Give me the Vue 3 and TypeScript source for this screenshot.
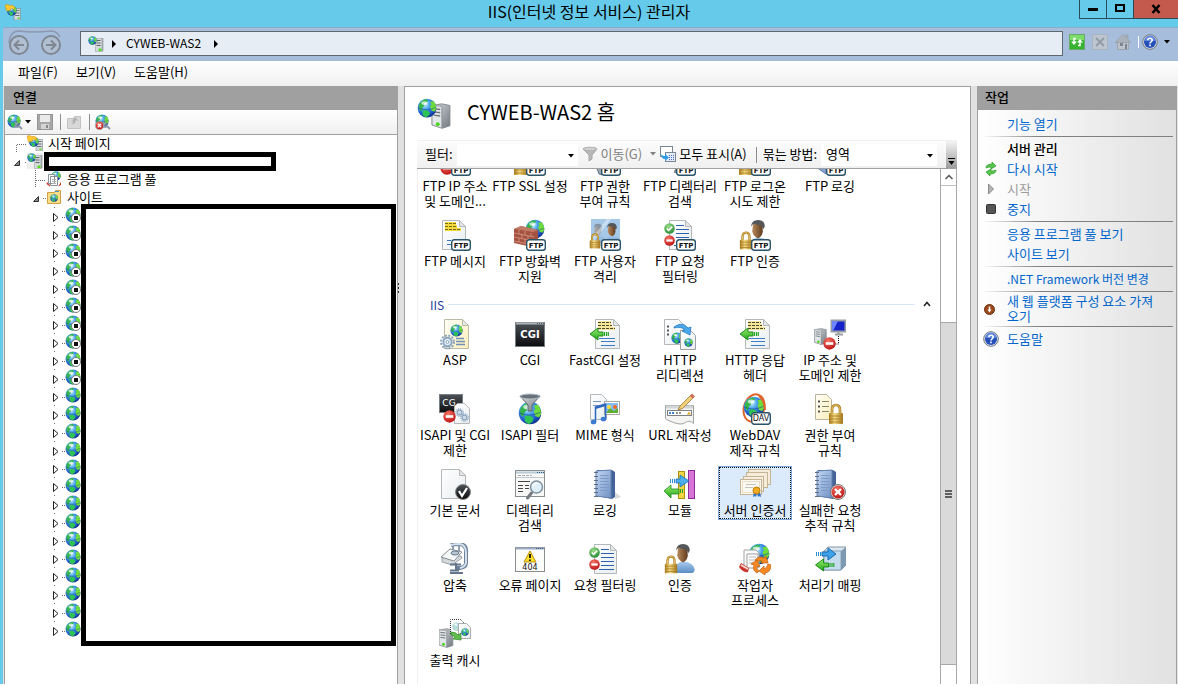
<script setup lang="ts">
import { onMounted, ref } from 'vue'

interface Feature {
  icon: string
  label: string
  selected?: boolean
}

interface Badge {
  text: string
  x: number
  y: number
  size: number
  tone: string
}

interface Action {
  label: string
  icon?: string
  kind?: 'heading' | 'disabled' | 'latin'
}

const ftpFeatures: Feature[] = [
  { icon: 'ftp-ip', label: 'FTP IP 주소\n및 도메인...' },
  { icon: 'ftp-ssl', label: 'FTP SSL 설정' },
  { icon: 'ftp-rules', label: 'FTP 권한\n부여 규칙' },
  { icon: 'ftp-browse', label: 'FTP 디렉터리\n검색' },
  { icon: 'ftp-ssl', label: 'FTP 로그온\n시도 제한' },
  { icon: 'ftp-log', label: 'FTP 로깅' },
  { icon: 'ftp-message', label: 'FTP 메시지' },
  { icon: 'ftp-firewall', label: 'FTP 방화벽\n지원' },
  { icon: 'ftp-users', label: 'FTP 사용자\n격리' },
  { icon: 'ftp-filter', label: 'FTP 요청\n필터링' },
  { icon: 'ftp-auth', label: 'FTP 인증' },
]

const iisFeatures: Feature[] = [
  { icon: 'asp', label: 'ASP' },
  { icon: 'cgi', label: 'CGI' },
  { icon: 'header', label: 'FastCGI 설정' },
  { icon: 'redirect', label: 'HTTP\n리디렉션' },
  { icon: 'header', label: 'HTTP 응답\n헤더' },
  { icon: 'ip', label: 'IP 주소 및\n도메인 제한' },
  { icon: 'isapi-cgi', label: 'ISAPI 및 CGI\n제한' },
  { icon: 'isapi-filter', label: 'ISAPI 필터' },
  { icon: 'mime', label: 'MIME 형식' },
  { icon: 'rewrite', label: 'URL 재작성' },
  { icon: 'webdav', label: 'WebDAV\n제작 규칙' },
  { icon: 'rules', label: '권한 부여\n규칙' },
  { icon: 'default-doc', label: '기본 문서' },
  { icon: 'browse', label: '디렉터리\n검색' },
  { icon: 'log', label: '로깅' },
  { icon: 'modules', label: '모듈' },
  { icon: 'certs', label: '서버 인증서', selected: true },
  { icon: 'failed', label: '실패한 요청\n추적 규칙' },
  { icon: 'compress', label: '압축' },
  { icon: 'errors', label: '오류 페이지' },
  { icon: 'filter', label: '요청 필터링' },
  { icon: 'auth', label: '인증' },
  { icon: 'worker', label: '작업자\n프로세스' },
  { icon: 'handler', label: '처리기 매핑' },
  { icon: 'cache', label: '출력 캐시' },
]

const sections = [
  { title: '', features: ftpFeatures },
  { title: 'IIS', features: iisFeatures },
]

const badges: Record<string, Badge> = {
  cgi: { text: 'CGI', x: 16, y: 20, size: 10, tone: 'light bold' },
  'isapi-cgi': { text: 'CG', x: 10, y: 13, size: 9, tone: 'light' },
  webdav: { text: 'DAV', x: 22, y: 28, size: 8, tone: 'dark' },
  errors: { text: '404', x: 16, y: 27, size: 8, tone: 'dark' },
}

function badgesFor(icon: string): Badge[] {
  if (icon.startsWith('ftp-')) return [{ text: 'FTP', x: 22, y: 29, size: 7, tone: 'dark bold' }]
  return badges[icon] ? [badges[icon]] : []
}

const actionGroups: Action[][] = [
  [{ label: '기능 열기' }],
  [
    { label: '서버 관리', kind: 'heading' },
    { label: '다시 시작', icon: 'restart' },
    { label: '시작', icon: 'start', kind: 'disabled' },
    { label: '중지', icon: 'stop' },
  ],
  [{ label: '응용 프로그램 풀 보기' }, { label: '사이트 보기' }],
  [{ label: '.NET Framework 버전 변경', kind: 'latin' }],
  [{ label: '새 웹 플랫폼 구성 요소 가져오기', icon: 'download' }],
  [{ label: '도움말', icon: 'help' }],
]

const menus = ['파일(F)', '보기(V)', '도움말(H)']
const sites = Array.from({ length: 24 }, (_, i) => ({ id: i, stopped: i < 10 }))

const filterText = ref('')
const grouping = ref('영역')
const featureView = ref<HTMLElement | null>(null)

onMounted(() => {
  if (featureView.value) featureView.value.scrollTop = 27
})
</script>

<template>
  <div class="window">
    <svg class="defs" width="0" height="0" aria-hidden="true">
      <defs>
        <radialGradient id="g-sea" cx=".38" cy=".3" r=".75">
          <stop offset="0" stop-color="#d2f4ff" />
          <stop offset=".35" stop-color="#4aa6ea" />
          <stop offset=".75" stop-color="#1c55c6" />
          <stop offset="1" stop-color="#0c2a80" />
        </radialGradient>
        <linearGradient id="g-page" x1="0" y1="0" x2="1" y2="1">
          <stop offset="0" stop-color="#fff" />
          <stop offset="1" stop-color="#e9edf0" />
        </linearGradient>
        <linearGradient id="g-cream" x1="0" y1="0" x2="1" y2="1">
          <stop offset="0" stop-color="#fffef6" />
          <stop offset="1" stop-color="#fbeebb" />
        </linearGradient>
        <linearGradient id="g-gold" x1="0" y1="0" x2="1" y2="0">
          <stop offset="0" stop-color="#a87a1c" />
          <stop offset=".4" stop-color="#f7dc86" />
          <stop offset="1" stop-color="#a5761b" />
        </linearGradient>
        <linearGradient id="g-steel" x1="0" y1="0" x2="1" y2="1">
          <stop offset="0" stop-color="#d5d9dc" />
          <stop offset="1" stop-color="#71797f" />
        </linearGradient>
        <linearGradient id="g-black" x1="0" y1="0" x2="0" y2="1">
          <stop offset="0" stop-color="#4c5258" />
          <stop offset="1" stop-color="#0b0c0e" />
        </linearGradient>
        <radialGradient id="g-red" cx=".4" cy=".3" r=".7">
          <stop offset="0" stop-color="#f77466" />
          <stop offset="1" stop-color="#bd1515" />
        </radialGradient>
        <radialGradient id="g-green" cx=".4" cy=".3" r=".7">
          <stop offset="0" stop-color="#9bdd88" />
          <stop offset="1" stop-color="#2b8f37" />
        </radialGradient>
        <linearGradient id="g-arrow" x1="0" y1="0" x2="0" y2="1">
          <stop offset="0" stop-color="#9df06c" />
          <stop offset="1" stop-color="#1fa31b" />
        </linearGradient>
        <linearGradient id="g-book" x1="0" y1="0" x2="1" y2="1">
          <stop offset="0" stop-color="#c3d7f2" />
          <stop offset="1" stop-color="#6f90c4" />
        </linearGradient>
        <linearGradient id="g-shirt" x1="0" y1="0" x2="0" y2="1">
          <stop offset="0" stop-color="#a9cbee" />
          <stop offset="1" stop-color="#5b8ec4" />
        </linearGradient>
        <linearGradient id="g-skin" x1="0" y1="0" x2="1" y2="0">
          <stop offset="0" stop-color="#b98a5c" />
          <stop offset="1" stop-color="#5e3b1e" />
        </linearGradient>
      </defs>

      <symbol id="globe" viewBox="0 0 32 32">
        <circle cx="16" cy="16" r="15" fill="url(#g-sea)" />
        <path d="M3 11C6 5 11 2 15 2l3 2-3 3-4 1 1 4-3 3-2 6-4-3z" fill="#35b54a" />
        <path d="M21 6l6-1 3 6 1 6-3 5-5-2-2-6 2-4z" fill="#6fdc3c" />
        <path d="M9 20l6-1 6 4-2 5-5 3-5-4z" fill="#2fc354" />
        <ellipse cx="12" cy="8" rx="5" ry="3" fill="#fff" opacity=".7" />
        <path d="M2 16q14 6 28-1" fill="none" stroke="#123c9b" stroke-width="1.500" opacity=".5" />
      </symbol>
      <symbol id="server" viewBox="0 0 32 32">
        <path d="M5 3l12-2 10 2v25l-9 3-13-4z" fill="url(#g-steel)" stroke="#7a8288" />
        <path d="M5 3l12 1v27L5 27z" fill="#e3e6e8" stroke="#868e94" />
        <path d="M7 7l8 1M7 11l8 1M7 15l8 1" stroke="#6d757b" stroke-width="1.600" />
        <circle cx="12" cy="26" r="2.400" fill="#48d81c" />
      </symbol>
      <symbol id="host" viewBox="0 0 32 32">
        <path d="M15 5h15v25l-3 1H15z" fill="#a9b0b5" stroke="#777f85" />
        <path d="M15 5h12v26H15z" fill="#d5d9dc" />
        <path d="M17 9h8M17 14h8M17 19h8" stroke="#5d666c" stroke-width="2" />
        <rect x="21" y="25" width="6" height="5" fill="#54dd20" />
        <use href="#globe" x="0" y="0" width="18" height="18" />
      </symbol>
      <symbol id="start-page" viewBox="0 0 32 32">
        <path d="M18 9h13v23H18z" fill="#d5d9dc" stroke="#6f777d" />
        <path d="M20 13h9M20 18h9M20 23h9" stroke="#6d767c" stroke-width="2" />
        <rect x="25" y="27" width="4" height="3" fill="#54dd20" />
        <use href="#globe" x="3" y="3" width="21" height="21" />
        <path d="M0 2l6-1 3 2q6-2 11 3l-3 5q-4-4-7-2l2 3-9 2z" fill="#ffc931" stroke="#c8860c" />
      </symbol>
      <symbol id="lock" viewBox="0 0 16 20">
        <path d="M4 10V6q0-5 4-5t4 5v4" fill="none" stroke="#a87a1c" stroke-width="2.600" />
        <path d="M4 10V6q0-5 4-5t4 5v4" fill="none" stroke="#eccb70" />
        <rect x="1" y="9" width="14" height="11" rx="1" fill="url(#g-gold)" />
        <path d="M1 12h14M1 15h14M1 18h14" stroke="#a5781f" stroke-width=".8" />
      </symbol>
      <symbol id="tag" viewBox="0 0 20 12" preserveAspectRatio="none">
        <rect x=".7" y=".7" width="18.600" height="10.600" rx="2.500" fill="#fff" stroke="#2b5468" stroke-width="1.400" />
      </symbol>
      <symbol id="minus" viewBox="0 0 12 12">
        <circle cx="6" cy="6" r="5.700" fill="url(#g-red)" />
        <rect x="2.500" y="4.800" width="7" height="2.400" fill="#fff" />
      </symbol>
      <symbol id="check" viewBox="0 0 12 12">
        <circle cx="6" cy="6" r="5.700" fill="url(#g-green)" />
        <path d="M3 6l2 2 4-4" fill="none" stroke="#fff" stroke-width="1.800" />
      </symbol>
      <symbol id="cross" viewBox="0 0 16 16">
        <circle cx="8" cy="8" r="7.500" fill="#e7e7e7" stroke="#777" />
        <circle cx="8" cy="8" r="6.500" fill="url(#g-red)" />
        <path d="M5 5l6 6M11 5l-6 6" stroke="#fff" stroke-width="2.200" />
      </symbol>
      <symbol id="person" viewBox="0 0 26 32">
        <path d="M4 30q0-10 9-11 11 1 12 8 0 4-4 4H6z" fill="url(#g-shirt)" />
        <path d="M8 5q5-4 9 0l1 8q-1 6-5 7-5-2-6-7z" fill="url(#g-skin)" />
        <path d="M6 8q0-7 7-7t7 7l-2 3-1-4-9-2z" fill="#55585a" />
      </symbol>
      <symbol id="book" viewBox="0 0 32 32">
        <path d="M8 2h15l3 2v25l-3 2-15-3z" fill="#44639a" />
        <path d="M7 3l15-1v28L7 28z" fill="url(#g-book)" stroke="#6480ae" />
        <path d="M11 7.500h9M11 10.500h9M11 13.500h9M11 16.500h9M11 19.500h9M11 22.500h9" stroke="#7f9cc8" />
        <path d="M5 4.500h4M5 8.500h4M5 12.500h4M5 16.500h4M5 20.500h4M5 24.500h4M5 28.500h4" stroke="#5f6e86" />
      </symbol>
      <symbol id="left-arrow" viewBox="0 0 20 14">
        <path d="M1 7l8-6v4h5v4H9v4z" fill="url(#g-arrow)" stroke="#1d8d1b" />
        <path d="M15.500 5v4M17.500 5v4M19.300 5v4" stroke="#27a824" stroke-width="1.200" />
      </symbol>
      <symbol id="gear" viewBox="0 0 16 16">
        <circle cx="8" cy="8" r="6.500" fill="none" stroke="#8ea6bd" stroke-width="2" stroke-dasharray="2 1.400" />
        <circle cx="8" cy="8" r="4.200" fill="#e6eff7" stroke="#8ba6c1" stroke-width="2" />
        <circle cx="8" cy="8" r="1.500" fill="#fff" stroke="#8ba6c1" />
      </symbol>
      <symbol id="magnifier" viewBox="0 0 18 20">
        <path d="M6 13l-4 5" stroke="#777b7f" stroke-width="3" stroke-linecap="round" />
        <circle cx="11" cy="7" r="6" fill="#dff0fb" stroke="#7e91a1" stroke-width="1.500" />
        <path d="M7 6q2-3 5-3" stroke="#fff" stroke-width="1.500" fill="none" />
      </symbol>

      <symbol id="ftp-ip" viewBox="0 0 32 32">
        <use href="#minus" x="1" y="17" width="14" height="14" />
        <use href="#tag" x="12" y="20" width="20" height="12" />
      </symbol>
      <symbol id="ftp-ssl" viewBox="0 0 32 32">
        <use href="#lock" x="-1" y="11" width="16" height="20" />
        <use href="#tag" x="12" y="20" width="20" height="12" />
      </symbol>
      <symbol id="ftp-rules" viewBox="0 0 32 32">
        <path d="M7 22l3 8 3 1V20z" fill="#9ba6b3" stroke="#66717d" />
        <use href="#tag" x="12" y="20" width="20" height="12" />
      </symbol>
      <symbol id="ftp-browse" viewBox="0 0 32 32">
        <path d="M14 22l-3 7" stroke="#7d8489" stroke-width="3" />
        <use href="#tag" x="12" y="20" width="20" height="12" />
      </symbol>
      <symbol id="ftp-log" viewBox="0 0 32 32">
        <path d="M2 23l10-2v9z" fill="#85a5d4" stroke="#5c7cae" />
        <use href="#tag" x="12" y="20" width="20" height="12" />
      </symbol>
      <symbol id="ftp-message" viewBox="0 0 32 32">
        <path d="M3.500 1.500h17l6 6v23h-23z" fill="url(#g-page)" stroke="#b4b8bb" />
        <path d="M20.500 1.500v6h6z" fill="#e4e6e8" stroke="#b4b8bb" />
        <path d="M6 4.500h11M6 7.500h12M6 10.500h16" stroke="#f2da3c" stroke-width="3" />
        <path d="M6 4.500h11M6 7.500h12M6 10.500h16" stroke="#7b6d16" stroke-dasharray="3 1" />
        <path d="M8 21.500h4M8 25.500h4" stroke="#3672b8" />
        <use href="#tag" x="12" y="20" width="20" height="12" />
      </symbol>
      <symbol id="ftp-firewall" viewBox="0 0 32 32">
        <use href="#globe" x="11" y="0" width="20" height="20" />
        <path d="M0 10l7-3 17 4v16l-6 1L0 24z" fill="#a55240" />
        <path d="M0 14l20 4M0 18l20 4M0 22l18 4M5 11v4M11 12v4M17 14v3M8 15v4M14 17v4M5 19v4M11 20v4" stroke="#dba38f" stroke-width=".7" />
        <path d="M0 10l7-3 17 4-5 2z" fill="#c27b66" />
        <use href="#tag" x="12" y="20" width="20" height="12" />
      </symbol>
      <symbol id="ftp-users" viewBox="0 0 32 32">
        <rect x="2" y="0" width="29" height="27" fill="#a7c9e8" />
        <use href="#person" x="1" y="2" width="16" height="24" opacity=".45" />
        <use href="#person" x="14" y="2" width="18" height="25" />
        <path d="M2 20L18 0h4L2 26z" fill="#fff" opacity=".4" />
        <use href="#lock" x="0" y="12" width="12" height="20" />
        <use href="#tag" x="12" y="20" width="20" height="12" />
      </symbol>
      <symbol id="filter" viewBox="0 0 32 32">
        <path d="M5.500 1.500h16l6 6v23h-22z" fill="url(#g-page)" stroke="#b4b8bb" />
        <path d="M21.500 1.500v6h6z" fill="#e4e6e8" stroke="#b4b8bb" />
        <path d="M12 6.500h8M12 10.500h13M12 14.500h13M12 18.500h13M12 22.500h13M10 26.500h15" stroke="#2a62ab" />
        <use href="#check" x="0" y="4" width="11" height="11" />
        <use href="#minus" x="0" y="16" width="11" height="11" />
      </symbol>
      <symbol id="ftp-filter" viewBox="0 0 32 32">
        <use href="#filter" width="32" height="32" />
        <use href="#tag" x="12" y="20" width="20" height="12" />
      </symbol>
      <symbol id="auth" viewBox="0 0 32 32">
        <use href="#person" x="5" y="0" width="28" height="31" />
        <use href="#lock" x="0" y="11" width="14" height="21" />
      </symbol>
      <symbol id="ftp-auth" viewBox="0 0 32 32">
        <use href="#auth" width="32" height="32" />
        <use href="#tag" x="12" y="20" width="20" height="12" />
      </symbol>
      <symbol id="asp" viewBox="0 0 32 32">
        <path d="M5.500 1.500h18l6 6v23h-24z" fill="url(#g-cream)" stroke="#bdbaa8" />
        <path d="M23.500 1.500v6h6z" fill="#e9e9e4" stroke="#bdbaa8" />
        <use href="#globe" x="11" y="6" width="13" height="13" />
        <path d="M17 20.500h8M17 23.500h9M17 26.500h9" stroke="#6f8fb5" stroke-width="1.500" />
        <use href="#gear" x="0" y="16" width="17" height="16" />
      </symbol>
      <symbol id="cgi" viewBox="0 0 32 32">
        <rect x="1.500" y="4.500" width="29" height="24" fill="url(#g-black)" stroke="#777e84" />
        <path d="M2 5.500h28" stroke="#aeb4b9" stroke-width="2" />
        <path d="M23 5.500h7" stroke="#4f565c" stroke-dasharray="1 1" />
      </symbol>
      <symbol id="header" viewBox="0 0 32 32">
        <path d="M6.500 1.500h18l6 6v23h-24z" fill="url(#g-page)" stroke="#b4b8bb" />
        <path d="M24.500 1.500v6h6z" fill="#e4e6e8" stroke="#b4b8bb" />
        <path d="M9 4.500h13M9 7.500h14M9 10.500h17" stroke="#f4e69a" stroke-width="3" />
        <path d="M9 4.500h13M9 7.500h14M9 10.500h17" stroke="#4e4826" stroke-dasharray="3 1" />
        <path d="M10 20.500h16M12 23.500h14M12 27.500h14" stroke="#3c7dc4" />
        <use href="#left-arrow" x="0" y="9" width="20" height="14" />
      </symbol>
      <symbol id="redirect" viewBox="0 0 32 32">
        <path d="M.500 1.500h14l5 5v20H.500z" fill="url(#g-page)" stroke="#b4b8bb" />
        <path d="M3 8.500h3M3 12.500h3M3 16.500h3" stroke="#555" stroke-width="2" stroke-dasharray="2 1" />
        <use href="#globe" x="7" y="14" width="12" height="12" />
        <path d="M16.500 12.500h10l5 5v14h-15z" fill="url(#g-page)" stroke="#9ca1a4" />
        <use href="#globe" x="20" y="20" width="9" height="9" />
        <path d="M10 9q8-6 14 1l3-1-1 8-8-4 3-1q-4-4-11-2z" fill="#4ba9e9" stroke="#1971bd" stroke-width=".7" />
      </symbol>
      <symbol id="ip" viewBox="0 0 32 32">
        <use href="#server" x="-2" y="8" width="17" height="21" />
        <path d="M17.500 2.500h14v11h-14z" fill="#1523c8" stroke="#989da3" stroke-width="2" />
        <path d="M18 3h6l-5 10h-1z" fill="#6e85ff" />
        <path d="M21 16.500h8M24.500 14v3" stroke="#9ba0a4" stroke-width="2" />
        <path d="M24.500 18v8h-4" fill="none" stroke="#111" stroke-dasharray="1 1" />
        <use href="#minus" x="9" y="19" width="13" height="13" />
      </symbol>
      <symbol id="isapi-cgi" viewBox="0 0 32 32">
        <rect x=".5" y="1.500" width="23" height="18" fill="url(#g-black)" stroke="#777e84" />
        <path d="M18.500 10.500h7l5 5v15h-15v-17z" fill="url(#g-page)" stroke="#b4b8bb" />
        <use href="#gear" x="16" y="15" width="9" height="9" />
        <use href="#gear" x="21" y="20" width="9" height="9" />
        <use href="#minus" x="4" y="17" width="13" height="13" />
      </symbol>
      <symbol id="isapi-filter" viewBox="0 0 32 32">
        <use href="#globe" x="4" y="8" width="24" height="24" />
        <path d="M6 3l8 9v6h4v-6l8-9z" fill="url(#g-steel)" stroke="#5d676f" />
        <ellipse cx="16" cy="3.500" rx="10" ry="2.500" fill="#66717b" stroke="#b7c0c7" />
      </symbol>
      <symbol id="mime" viewBox="0 0 32 32">
        <path d="M1.500 1.500h11l5 5v20h-16z" fill="url(#g-page)" stroke="#b4b8bb" />
        <path d="M4 8.500h8M4 12.500h8" stroke="#7c98bc" />
        <rect x="15.500" y="8.500" width="15" height="13" fill="#fff" stroke="#a7a7a7" />
        <rect x="17" y="10" width="12" height="10" fill="#84bdf4" />
        <path d="M17 20l4-5 4 3 4-3v5z" fill="#5fac32" />
        <circle cx="26" cy="14" r="2" fill="#f36b21" />
        <circle cx="20" cy="14" r="2" fill="#ffdd3d" />
        <path d="M6.500 29V14l10-3v15" fill="none" stroke="#2c67bf" stroke-width="1.500" />
        <path d="M6.500 15l10-3" stroke="#2c67bf" stroke-width="2" />
        <ellipse cx="4.500" cy="29" rx="2.800" ry="2.300" fill="#3b7bd2" />
        <ellipse cx="14.500" cy="26" rx="2.800" ry="2.300" fill="#3b7bd2" />
      </symbol>
      <symbol id="rewrite" viewBox="0 0 32 32">
        <path d="M1.500 12.500h28v18q-4-4-8-1t-12 0-8-4z" fill="#f4f5f3" stroke="#9da2a3" />
        <path d="M2 14h27" stroke="#d2d6d7" stroke-width="3" />
        <rect x="3.500" y="17.500" width="24" height="5" fill="#fff" stroke="#7b8184" />
        <path d="M5 20h6" stroke="#3e83d8" stroke-width="2" stroke-dasharray="2 1" />
        <path d="M12 20h5" stroke="#222" stroke-dasharray="2 1" />
        <path d="M23 21.500l2-3 2 3z" fill="#e3a920" />
        <path d="M14 17l2-4L28 1l2.500 2.500-12 12z" fill="#f2cf79" stroke="#a07332" stroke-width=".8" />
        <path d="M28 1l2.500 2.500-2 2-2.500-2.500z" fill="#d86d60" />
      </symbol>
      <symbol id="webdav" viewBox="0 0 32 32">
        <ellipse cx="15" cy="15" rx="10" ry="14" fill="none" stroke="#e0642a" stroke-width="2" transform="rotate(18 15 15)" />
        <use href="#globe" x="4" y="3" width="22" height="22" />
        <path d="M20 3q6 5 6 14" fill="none" stroke="#e0642a" stroke-width="2" />
        <use href="#tag" x="12" y="19" width="20" height="13" />
      </symbol>
      <symbol id="rules" viewBox="0 0 32 32">
        <path d="M1.500 1.500h11l5 5v20h-16z" fill="url(#g-cream)" stroke="#b9b59f" />
        <path d="M4 8.500h2M4 13.500h2M4 18.500h2" stroke="#555" stroke-width="2" />
        <path d="M8 8.500h7M8 13.500h7M8 18.500h7" stroke="#8a8666" />
        <use href="#lock" x="14" y="10" width="16" height="22" />
      </symbol>
      <symbol id="default-doc" viewBox="0 0 32 32">
        <path d="M2.500 1.500h18l6 6v23h-24z" fill="url(#g-page)" stroke="#b4b8bb" />
        <path d="M20.500 1.500v6h6z" fill="#e4e6e8" stroke="#b4b8bb" />
        <circle cx="24" cy="24" r="7.500" fill="url(#g-black)" stroke="#888" />
        <path d="M20 23l3 5 5-8" fill="none" stroke="#fff" stroke-width="2.200" />
      </symbol>
      <symbol id="browse" viewBox="0 0 32 32">
        <rect x="1.500" y="2.500" width="29" height="26" fill="#f8f8f7" stroke="#898e90" />
        <path d="M2 4.500h28" stroke="#b9cbd6" stroke-width="2" />
        <path d="M23 4.500h7" stroke="#315e85" stroke-dasharray="1 1" />
        <path d="M4 7.500h14" stroke="#a9adaf" stroke-dasharray="3 1" />
        <path d="M2 9.500h28" stroke="#c5c8ca" />
        <path d="M4 13.500h12M4 17.500h5M11 17.500h4M4 20.500h5M11 20.500h4M4 23.500h5" stroke="#454545" />
        <use href="#magnifier" x="11" y="12" width="19" height="20" />
      </symbol>
      <symbol id="log" viewBox="0 0 32 32">
        <path d="M26 24l6 5-6 2z" fill="#d7d9dd" />
        <use href="#book" width="32" height="32" />
      </symbol>
      <symbol id="modules" viewBox="0 0 32 32">
        <rect x="14.500" y="3.500" width="6" height="27" fill="#f0d544" stroke="#b58e10" />
        <rect x="24.500" y="2.500" width="6" height="28" fill="#d873d7" stroke="#8d2c98" />
        <path d="M12 11h4V7l9 6-9 6v-4h-4z" fill="#4bacee" stroke="#1b73bd" stroke-width=".8" />
        <path d="M6.500 11v4M8.500 11v4M10.500 11v4" stroke="#2d8ed8" />
        <path d="M0 23l7-6v4h8v5H7v4z" fill="url(#g-arrow)" stroke="#1d8d1b" stroke-width=".8" />
        <path d="M16.500 21v4M18.500 21v4" stroke="#27a824" />
      </symbol>
      <symbol id="certs" viewBox="0 0 32 32">
        <g fill="#f5ecda" stroke="#c4b494">
          <rect x="9.500" y="1.500" width="22" height="15" />
          <rect x="7.500" y="4.500" width="21" height="15" />
          <rect x="4.500" y="8.500" width="20" height="15" />
          <rect x="1.500" y="11.500" width="21" height="15" fill="#fbf8ef" />
        </g>
        <rect x="3.500" y="13.500" width="17" height="11" fill="none" stroke="#e9ddc4" />
        <path d="M7 16.500h10M6 19.500h8" stroke="#c4c4c4" />
        <path d="M15 24l-1 5 2-1 1 1 1-4 1 4 1-1 2 1-1-5z" fill="#2d73c8" />
        <circle cx="17.500" cy="22.500" r="3.500" fill="#f0aa22" stroke="#bd7d0b" />
      </symbol>
      <symbol id="failed" viewBox="0 0 32 32">
        <use href="#book" x="-4" width="32" height="32" />
        <use href="#cross" x="16" y="16" width="16" height="16" />
      </symbol>
      <symbol id="compress" viewBox="0 0 32 32">
        <path d="M12 2q3-1 9-1 7 1 6 9v10q0 4-6 5h-3" fill="none" stroke="#6e8199" stroke-width="4" />
        <path d="M12 2q3-1 9-1 6 1 6 9v10q-1 4-6 5" fill="none" stroke="#d3dfec" stroke-width="2" />
        <path d="M14 3v9M20 3v9" stroke="#71869d" stroke-width="1.500" />
        <path d="M3 19l10 3 10-7-1-2H3z" fill="#d5d9dc" stroke="#7d858c" stroke-width=".7" />
        <path d="M2 14l9-8 12 3-8 9z" fill="#f7f8f9" stroke="#858d94" />
        <path d="M17 20v8M11 21.500h11M11 30h13M11 27.500h9" stroke="#64768b" stroke-width="2" />
        <ellipse cx="16" cy="10" rx="4" ry="2" fill="#b9c6d4" stroke="#64768b" />
      </symbol>
      <symbol id="errors" viewBox="0 0 32 32">
        <rect x="1.500" y="4.500" width="29" height="24" fill="#fdfdfc" stroke="#898e90" />
        <path d="M2 5.500h28" stroke="#9aabc4" stroke-width="2" />
        <path d="M22 5.500h8" stroke="#315e85" stroke-dasharray="1 1" />
        <path d="M16 8l6 11H10z" fill="#ffdf2d" stroke="#bd8e09" stroke-linejoin="round" />
        <path d="M16 11v4M16 16.500V18" stroke="#111" stroke-width="1.800" />
      </symbol>
      <symbol id="worker" viewBox="0 0 32 32">
        <use href="#globe" x="9" y="0" width="22" height="22" />
        <path d="M5 7h12l3 3v14H5z" fill="#fafafa" stroke="#a5a5a5" />
        <path d="M8 11h11v14H8z" fill="#fff" stroke="#9d9d9d" />
        <path d="M10 14h7M10 17h7M10 20h5" stroke="#b5b5b5" />
        <path d="M0 24l2-4 8 5-1 4q-5 1-9-5z" fill="#c8362a" />
        <path d="M2 22l7 4" stroke="#f5d9d4" stroke-width="2" />
        <g fill="#f58a25" stroke="#c25908" stroke-width=".7">
          <path d="M16 17q4-5 9-2l2-2 2 7-7 0 1-2q-3-1-5 1z" />
          <path d="M32 22q0 7-6 8v2l-6-4 5-5v3q3-1 4-5z" />
          <path d="M18 30q-5-3-3-8l-3-1 6-4 3 7-3-1q-1 3 2 5z" />
        </g>
      </symbol>
      <symbol id="handler" viewBox="0 0 32 32">
        <path d="M10 8l4-4h18v18l-5 5H10z" fill="#dce6ee" stroke="#8497a7" />
        <path d="M10 8h17v19H10z" fill="#c5dcef" stroke="#8da4b8" />
        <path d="M27 8l5-4v18l-5 5z" fill="#7e9ab2" />
        <path d="M8 9h6V5l8 6-8 6v-4H8z" fill="#3fa2e8" stroke="#176bb3" />
        <path d="M2.500 9v4M4.500 9v4M6.500 9v4" stroke="#2d8ed8" />
        <use href="#left-arrow" x="0" y="15" width="21" height="14" />
      </symbol>
      <symbol id="cache" viewBox="0 0 32 32">
        <use href="#server" x="-3" y="7" width="20" height="26" />
        <path d="M11.500 16V1.500h10l5 5" fill="#fff" stroke="#333" stroke-dasharray="1 1" />
        <use href="#globe" x="13" y="4" width="9" height="9" opacity=".35" />
        <path d="M19.500 5.500h8l4 4v11h-12z" fill="url(#g-page)" stroke="#a9adb0" />
        <use href="#globe" x="22" y="10" width="8" height="8" />
        <path d="M12 14q5 0 7 3l3-2v7l-8-1 2-2q-2-2-4-2z" fill="#61bd4b" stroke="#2f8a2a" stroke-width=".7" />
      </symbol>

      <symbol id="pool" viewBox="0 0 16 16">
        <use href="#globe" x="5" y="0" width="10" height="10" />
        <path d="M1 11l3 3v1.500L.500 13zM15 11v3l-3 1.500z" fill="#d63a2b" />
        <path d="M2.500 3.500h6v9h-6zM4.500 5.500h7v9h-7z" fill="#fff" stroke="#8b9297" />
        <path d="M6 8.500h4M6 10.500h4M6 12.500h4" stroke="#b0b0b0" />
      </symbol>
      <symbol id="site-folder" viewBox="0 0 16 16">
        <path d="M1.500 3.500h7l1-2h5v13h-13z" fill="#f9dd85" stroke="#d1a243" />
        <path d="M9 2.500h4" stroke="#4c95dc" />
        <use href="#globe" x="4" y="5" width="8" height="8" />
      </symbol>
      <symbol id="stop-badge" viewBox="0 0 10 10">
        <circle cx="5" cy="5" r="4.500" fill="#fff" stroke="#777" />
        <rect x="3" y="3" width="4" height="4" fill="#111" />
      </symbol>
      <symbol id="connect" viewBox="0 0 16 16">
        <use href="#globe" x="0" y="0" width="14" height="14" />
        <path d="M8 8l3 3M11 9l-3 3q3 2 4 0l3 3" stroke="#8a9ba8" stroke-width="1.800" fill="none" />
      </symbol>
      <symbol id="restart" viewBox="0 0 16 16">
        <path d="M3 7q0-4 6-4V1l4 4-5 3V6Q5 6 3 7z" fill="#57c64b" stroke="#2f9a2c" stroke-width=".7" />
        <path d="M13 9q0 4-6 4v2l-4-4 5-3v2q3 0 5-1z" fill="#57c64b" stroke="#2f9a2c" stroke-width=".7" />
      </symbol>
      <symbol id="start" viewBox="0 0 16 16">
        <path d="M5.500 3v10l5-5z" fill="#b4b4b4" stroke="#8a8a8a" />
      </symbol>
      <symbol id="stop" viewBox="0 0 16 16">
        <rect x="3.500" y="3.500" width="9" height="9" rx="1" fill="#555" stroke="#333" />
      </symbol>
      <symbol id="download" viewBox="0 0 16 16">
        <circle cx="6.500" cy="8.500" r="5" fill="#9c4a1c" stroke="#6d3010" />
        <path d="M6.500 5.500v4" stroke="#fff" stroke-width="1.500" />
        <path d="M4.500 8.500l2 3 2-3z" fill="#fff" />
      </symbol>
      <symbol id="help" viewBox="0 0 16 16">
        <circle cx="8" cy="8" r="7.300" fill="#dfe3ea" stroke="#71777f" />
        <circle cx="8" cy="8" r="6" fill="#2450b8" />
        <path d="M2.500 7a5.500 5.500 0 0 1 11 0z" fill="#5d86dc" />
        <path d="M5.800 6.200q0-2 2.200-2t2.200 1.900q0 1-1.100 1.700T8 9.500M8 10.600v1.700" fill="none" stroke="#fff" stroke-width="1.600" />
      </symbol>
      <symbol id="caret" viewBox="0 0 6 4">
        <path d="M0 0h6L3 3.500z" fill="currentColor" />
      </symbol>
    </svg>

    <header class="titlebar">
      <svg class="ico16 app-icon"><use href="#start-page" /></svg>
      <h1>IIS(인터넷 정보 서비스) 관리자</h1>
      <div class="window-buttons">
        <button type="button" aria-label="최소화"><svg width="10" height="10"><rect y="4" width="10" height="3" /></svg></button>
        <button type="button" aria-label="최대화"><svg width="10" height="10"><rect x="1" y="1" width="8" height="6" fill="none" stroke="#000" stroke-width="2" /></svg></button>
        <button type="button" class="close" aria-label="닫기"><svg width="10" height="10"><path d="M1.500 1l7 8M8.500 1l-7 8" stroke="#000" stroke-width="2.500" /></svg></button>
      </div>
    </header>

    <div class="frame">
      <div class="address-row">
        <div class="history">
          <svg class="history-shape" width="54" height="30" aria-hidden="true">
            <path d="M1 18Q0 3 10 2h34q9 0 9 12v4q-4 9-14 8-6-5-12-5t-12 5Q3 27 1 18z" fill="#9fb3cd" opacity=".7" />
            <path d="M1 14Q2 2 11 2q6 1 15 1T43 2q6 0 9 6" fill="none" stroke="#8b9ab2" stroke-width="1.500" />
          </svg>
          <button type="button" aria-label="뒤로"><svg width="20" height="20"><circle cx="10" cy="10" r="9" /><path d="M15 10H6M10 5.500L5.500 10l4.500 4.500" /></svg></button>
          <button type="button" aria-label="앞으로"><svg width="20" height="20"><circle cx="10" cy="10" r="9" /><path d="M5 10h9M10 5.500l4.500 4.500-4.500 4.500" /></svg></button>
        </div>
        <nav class="address" aria-label="주소">
          <svg class="ico16"><use href="#host" /></svg>
          <svg width="4" height="8"><path d="M0 0v8l4-4z" /></svg>
          <a href="#server">CYWEB-WAS2</a>
          <svg width="4" height="8"><path d="M0 0v8l4-4z" /></svg>
        </nav>
        <div class="address-tools">
          <button type="button" aria-label="새로 고침">
            <svg class="ico16" viewBox="0 0 16 16"><rect x=".5" y=".5" width="15" height="15" fill="#36b32f" stroke="#6aa86c" /><rect x="1" y="1" width="14" height="5" fill="#7bdc68" /><path d="M7 4.500H5V8M9 11.500h2V8" fill="none" stroke="#fff" stroke-width="1.500" /><path d="M2 7.500h6l-3 3.500zM8 8.500h6L11 5z" fill="#fff" /></svg>
          </button>
          <button type="button" aria-label="중지">
            <svg class="ico16" viewBox="0 0 16 16"><rect x=".5" y=".5" width="15" height="15" fill="#bcc5d0" stroke="#a9b3be" /><path d="M4 4l8 8M12 4l-8 8" stroke="#929ba6" stroke-width="1.800" /></svg>
          </button>
          <button type="button" aria-label="홈">
            <svg class="ico16" viewBox="0 0 16 16"><path d="M2.500 8v7.500h11V8" fill="#bcc3cb" stroke="#9ba4ad" /><path d="M0 8.500L8 .5l3 3V1h2v4.500l3 3z" fill="#aab3bd" stroke="#929ba5" stroke-width=".7" /><path d="M5 9h3v3H5zM10 10h2v5h-2z" fill="#7d8690" /></svg>
          </button>
          <span class="tool-divider"></span>
          <button type="button" class="help-button" aria-label="도움말"><svg class="ico16"><use href="#help" /></svg><svg class="caret"><use href="#caret" /></svg></button>
        </div>
      </div>

      <nav class="menubar" aria-label="메뉴">
        <button v-for="menu in menus" :key="menu" type="button">{{ menu }}</button>
      </nav>

      <main class="panes">
        <section class="connections">
          <h2 class="pane-title">연결</h2>
          <div class="connection-tools">
            <button type="button" class="connect-button" aria-label="연결 만들기"><svg class="ico16"><use href="#connect" /></svg><svg class="caret"><use href="#caret" /></svg></button>
            <button type="button" aria-label="연결 저장">
              <svg class="ico16" viewBox="0 0 16 16"><rect x=".5" y=".5" width="15" height="15" fill="#a7a7a7" stroke="#959595" /><rect x="3" y="1" width="10" height="7" fill="#e9e9e9" /><rect x="4" y="10" width="8" height="5" fill="#d4d4d4" /><rect x="9" y="11" width="2" height="3" fill="#888" /></svg>
            </button>
            <span class="tool-divider"></span>
            <button type="button" aria-label="위로">
              <svg class="ico16" viewBox="0 0 16 16"><path d="M1.500 4.500h6l1-2h6v12h-13z" fill="#d8d8d8" stroke="#c2c2c2" /><path d="M4 11q3-1 3-4L5 8l4-5 4 4-3-1q0 4-6 5z" fill="#b3b3b3" /></svg>
            </button>
            <span class="tool-divider"></span>
            <button type="button" aria-label="연결 삭제">
              <svg class="ico16" viewBox="0 0 16 16"><use href="#connect" width="16" height="16" /><use href="#cross" x="0" y="7" width="9" height="9" /></svg>
            </button>
          </div>
          <ul class="tree">
            <li>
              <svg width="22" height="18"><path class="dots" d="M11.500 18v-7.500H22" /></svg>
              <svg class="ico16"><use href="#start-page" /></svg>
              <span>시작 페이지</span>
            </li>
            <li>
              <svg width="22" height="18"><path d="M9.500 13.500h5v-5z" class="open" /><path class="dots" d="M20 10.500h2" /></svg>
              <svg class="ico16 current"><use href="#host" /></svg>
              <span class="mask mask-server"></span>
            </li>
            <li>
              <svg width="41" height="18"><path class="dots" d="M30.500 0v18M31 10.500h10" /></svg>
              <svg class="ico16"><use href="#pool" /></svg>
              <span>응용 프로그램 풀</span>
            </li>
            <li>
              <svg width="41" height="18"><path d="M28.500 13.500h5v-5z" class="open" /><path class="dots" d="M38 10.500h3" /></svg>
              <svg class="ico16"><use href="#site-folder" /></svg>
              <span>사이트</span>
            </li>
            <li class="sites">
              <ul>
                <li v-for="site in sites" :key="site.id">
                  <svg width="60" height="18"><path class="dots" d="M49.500 1v2M57 11.500h3" /><path d="M48.500 7.500v8l4.500-4z" class="closed" /></svg>
                  <svg class="ico16" viewBox="0 0 16 16">
                    <use href="#globe" width="16" height="16" />
                    <use v-if="site.stopped" href="#stop-badge" x="6" y="6" width="10" height="10" />
                  </svg>
                </li>
              </ul>
              <span class="mask mask-sites"></span>
            </li>
          </ul>
        </section>

        <div class="splitter" role="separator" aria-orientation="vertical"><i></i><i></i><i></i></div>

        <section class="home">
          <div class="home-title">
            <svg class="home-icon" viewBox="0 0 34 34"><use href="#server" x="11" y="4" width="26" height="30" /><use href="#globe" x="0" y="1" width="20" height="20" /></svg>
            <h2>CYWEB-WAS2 홈</h2>
          </div>
          <div class="filterbar">
            <label for="filter-box">필터:</label>
            <div class="combo combo-filter">
              <input id="filter-box" v-model="filterText" type="text" />
              <svg class="caret"><use href="#caret" /></svg>
            </div>
            <button type="button" class="go" disabled>
              <svg class="ico16" viewBox="0 0 16 16"><path d="M1 3l6 6v6l3-2V9l5-6z" fill="#b9b9b9" stroke="#a6a6a6" /><ellipse cx="8" cy="3" rx="7" ry="1.800" fill="#cfcfcf" stroke="#b0b0b0" /></svg>
              이동(G)
              <svg class="caret"><use href="#caret" /></svg>
            </button>
            <button type="button" class="show-all">
              <svg class="ico16" viewBox="0 0 16 16"><rect x=".5" y=".5" width="12" height="10" fill="#fff" stroke="#7a8794" /><rect x="5.500" y="6.500" width="10" height="9" fill="#e4ebf6" stroke="#7a8794" /><path d="M9 9.500h6M9 11.500h6M9 13.500h6" stroke="#4d6fc2" stroke-dasharray="1 1" /><path d="M1 7q0 3 4 3V8l4 3.500L5 15v-2q-4 0-4-6z" fill="#2f9be3" /></svg>
              모두 표시(A)
            </button>
            <span class="tool-divider"></span>
            <label for="group-box">묶는 방법:</label>
            <div class="combo combo-group">
              <select id="group-box" v-model="grouping"><option>영역</option></select>
              <svg class="caret"><use href="#caret" /></svg>
            </div>
            <button type="button" class="overflow" aria-label="추가 단추"><svg width="7" height="8"><path d="M0 .5h7" stroke="#000" /><path d="M.5 3h6l-3 4z" /></svg></button>
          </div>
          <div class="feature-area">
            <div ref="featureView" class="features">
              <template v-for="section in sections" :key="section.title">
                <h3 v-if="section.title" class="group-title">
                  <span>{{ section.title }}</span>
                  <svg width="8" height="6"><path d="M1 5l3-3.500L7 5" fill="none" stroke="#222" stroke-width="1.500" /></svg>
                </h3>
                <ul class="feature-grid">
                  <li v-for="f in section.features" :key="f.label">
                    <button type="button" class="feature" :class="{ selected: f.selected }">
                      <svg class="ico32" viewBox="0 0 32 32">
                        <use :href="'#' + f.icon" width="32" height="32" />
                        <text
                          v-for="b in badgesFor(f.icon)"
                          :key="b.text"
                          :x="b.x"
                          :y="b.y"
                          :font-size="b.size"
                          :class="b.tone"
                          text-anchor="middle"
                        >{{ b.text }}</text>
                      </svg>
                      <span>{{ f.label }}</span>
                    </button>
                  </li>
                </ul>
              </template>
            </div>
            <div class="scrollbar" aria-hidden="true">
              <div class="scroll-up"><svg width="8" height="6"><path d="M.5 5L4 1.500 7.500 5" fill="none" stroke="#555" stroke-width="1.500" /></svg></div>
              <div class="scroll-track"></div>
              <div class="scroll-thumb"><i></i><i></i><i></i></div>
              <div class="scroll-end"></div>
            </div>
          </div>
        </section>

        <aside class="actions">
          <h2 class="pane-title">작업</h2>
          <div class="action-list">
            <ul v-for="(group, gi) in actionGroups" :key="gi">
              <li v-for="action in group" :key="action.label" :class="action.kind">
                <span class="action-icon"><svg v-if="action.icon" class="ico16"><use :href="'#' + action.icon" /></svg></span>
                <strong v-if="action.kind === 'heading'" class="action-label">{{ action.label }}</strong>
                <span v-else-if="action.kind === 'disabled'" class="action-label">{{ action.label }}</span>
                <a v-else href="#action" class="action-label">{{ action.label }}</a>
              </li>
            </ul>
          </div>
        </aside>
      </main>
    </div>
  </div>
</template>

<style>
body {
  margin: 0;
  background: #fff;
}
</style>

<style scoped>
* {
  box-sizing: border-box;
}
.window {
  display: flex;
  flex-direction: column;
  height: calc(100vh - 2px);
  min-height: 480px;
  background: #66caea;
  color: #000;
  font: 13px/15px "Noto Sans CJK KR", "Open Sans", sans-serif;
}
.defs {
  position: absolute;
}
h1, h2, h3, ul {
  margin: 0;
  padding: 0;
  font-weight: 400;
  list-style: none;
}
button, input, select {
  margin: 0;
  padding: 0;
  border: 0;
  border-radius: 0;
  background: none;
  color: inherit;
  font: inherit;
}
svg {
  display: block;
  flex: none;
}
.ico16 {
  width: 16px;
  height: 16px;
}
.ico32 {
  width: 32px;
  height: 32px;
  font-family: "DejaVu Sans", sans-serif;
}
.caret {
  width: 6px;
  height: 4px;
}
.dark {
  fill: #111;
}
.light {
  fill: #fff;
}
.bold {
  font-weight: 700;
}

.titlebar {
  display: grid;
  grid-template-columns: 1fr auto 1fr;
  height: 27px;
}
.app-icon {
  margin: 4px 0 0 5px;
}
.titlebar h1 {
  font-size: 16px;
  line-height: 23px;
}
.window-buttons {
  display: flex;
  justify-self: end;
  height: 19px;
}
.window-buttons button {
  display: grid;
  place-items: center;
  width: 27px;
  border: 1px solid #2b4d59;
  border-top: 0;
  border-right: 0;
}
.window-buttons .close {
  width: 45px;
  background: #c45a4d;
}

.frame {
  display: flex;
  flex: 1;
  flex-direction: column;
  min-height: 0;
  margin-left: 3px;
  background: #e1e1e1;
}
.address-row {
  display: flex;
  align-items: center;
  height: 34px;
  padding: 0 8px 2px 5px;
  border-top: 1px solid #86aecb;
  background: #a6bedb;
}
.history {
  position: relative;
  display: flex;
  align-items: center;
  gap: 12px;
  width: 54px;
  height: 30px;
  margin-right: 18px;
  padding: 2px 0 0 1px;
}
.history-shape {
  position: absolute;
  inset: 0;
}
.history button {
  position: relative;
}
.history button svg {
  fill: #b0bfd2;
  stroke: #7e8792;
  stroke-width: 2;
}
.history path {
  fill: none;
}
.address {
  display: flex;
  flex: 1;
  align-items: center;
  height: 25px;
  padding-left: 7px;
  border: 1px solid #61676f;
  background: #e7edf5;
}
.address a {
  margin: 0 13px 0 10px;
  padding-bottom: 2px;
  color: #000;
  font-size: 12px;
  text-decoration: none;
}
.address .ico16 {
  margin-right: 8px;
}
.address-tools {
  display: flex;
  align-items: center;
  gap: 7px;
  height: 24px;
  padding: 0 0 4px 6px;
}
.address-tools .tool-divider {
  width: 1px;
  height: 12px;
  background: #fff;
}
.help-button, .connect-button {
  display: flex;
  align-items: center;
}
.help-button .caret {
  margin-left: 6px;
}
.address-tools .help-button {
  margin-left: -4px;
}

.menubar {
  display: flex;
  gap: 18px;
  height: 25px;
  padding-left: 15px;
  background: linear-gradient(#fff, #f0f0f0);
}
.menubar button {
  height: 20px;
}

.panes {
  display: grid;
  flex: 1;
  grid-template-columns: 394px 6px minmax(0, 1fr) 200px;
  min-height: 0;
  padding: 0 1px;
}
.pane-title {
  height: 24px;
  padding-left: 8px;
  background: #a0a0a0;
  font-size: 13px;
  font-weight: 500;
  line-height: 22px;
}
.tool-divider {
  width: 1px;
  height: 16px;
  background: #8d8d8d;
}

.connections {
  display: flex;
  flex-direction: column;
  min-height: 0;
  border: 1px solid #a0a0a0;
  border-width: 0 1px;
  background: #fff;
}
.connection-tools {
  display: flex;
  align-items: center;
  height: 25px;
  padding-left: 2px;
  border-bottom: 1px solid #a0a0a0;
  background: linear-gradient(#fff, #f0f0f0);
}
.connect-button {
  gap: 2px;
  margin-right: 6px;
}
.connection-tools .tool-divider {
  margin: 0 5px 0 7px;
}
.tree {
  flex: 1;
  min-height: 0;
  margin-top: -1px;
  overflow: hidden;
}
.tree li {
  position: relative;
  display: flex;
  align-items: center;
  height: 18px;
}
.tree li.sites {
  display: block;
  height: auto;
}
.tree span {
  margin-left: 5px;
  padding-bottom: 2px;
}
.tree .mask {
  position: absolute;
  margin: 0;
  padding: 0;
  border: 5px solid #000;
  background: #fff;
}
.current {
  background: #eee;
}
.tree .mask-server {
  top: 0;
  left: 39px;
  width: 232px;
  height: 19px;
}
.tree .mask-sites {
  top: -2px;
  right: 1px;
  bottom: -8px;
  left: 76px;
}
.dots {
  fill: none;
  stroke: #6f6f6f;
  stroke-dasharray: 1 1;
}
.open {
  fill: #888;
  stroke: #333;
}
.closed {
  fill: #fff;
  stroke: #222;
}

.splitter {
  display: flex;
  flex-direction: column;
  gap: 2px;
  padding-top: 197px;
  background: #e1e1e1;
}
.splitter i {
  width: 1px;
  height: 2px;
  background: #333;
}

.home {
  display: flex;
  flex-direction: column;
  min-width: 0;
  min-height: 0;
  margin-right: 6px;
  padding: 0 13px 0 12px;
  border: 1px solid #a0a0a0;
  border-bottom: 0;
  background: #fff;
}
.home-title {
  display: flex;
  align-items: center;
  gap: 16px;
  height: 53px;
}
.home-icon {
  width: 34px;
  height: 34px;
}
.home-title h2 {
  padding-bottom: 4px;
  font-size: 20px;
  line-height: 24px;
}
.filterbar {
  display: flex;
  align-items: center;
  height: 29px;
  padding-left: 8px;
  border-top: 1px solid #f0f0f0;
  border-bottom: 1px solid #a0a0a0;
  background: linear-gradient(#fcfcfc, #f0f0f0);
  white-space: nowrap;
}
.filterbar label {
  padding-bottom: 2px;
}
.combo {
  position: relative;
  height: 22px;
  margin-left: 4px;
  background: #fff;
}
.combo input, .combo select {
  width: 100%;
  height: 22px;
  padding: 0 16px 2px 5px;
  outline: 0;
  appearance: none;
}
.combo .caret {
  position: absolute;
  top: 10px;
  right: 4px;
  pointer-events: none;
}
.combo-filter {
  width: 121px;
}
.combo-group {
  flex: 1;
  margin-right: 20px;
}
.combo-group + .overflow {
  margin-left: -11px;
}
.go, .show-all {
  display: flex;
  align-items: center;
  gap: 3px;
  padding-bottom: 2px;
}
.go {
  margin-left: 4px;
  color: #808080;
}
.go .caret {
  margin: 0 4px 0 5px;
}
.filterbar .tool-divider {
  margin: 0 6px 0 9px;
}
.overflow {
  display: flex;
  align-items: flex-end;
  justify-content: center;
  width: 11px;
  height: 27px;
  padding-bottom: 2px;
  background: linear-gradient(#f4f4f4, #9d9d9d);
}
.feature-area {
  display: flex;
  flex: 1;
  min-height: 0;
  border-left: 1px solid #efefef;
}
.features {
  flex: 1;
  min-width: 0;
  overflow-y: scroll;
  padding-bottom: 60px;
  scrollbar-width: none;
}
.feature-grid {
  display: grid;
  grid-template-columns: repeat(auto-fill, 75px);
  grid-auto-rows: 75px;
}
.feature {
  display: flex;
  flex-direction: column;
  align-items: center;
  width: 74px;
  padding: 1px 0 2px;
  border: 1px solid transparent;
  line-height: 15px;
  text-align: center;
  white-space: pre;
}
.feature .ico32 {
  margin-bottom: 2px;
}
.feature.selected {
  border-color: #7da7d8;
  outline: 1px dotted #111;
  outline-offset: -2px;
  background: #dcebfc;
}
.group-title {
  display: flex;
  align-items: center;
  height: 24px;
  padding: 0 9px 0 12px;
  color: #1e3c9a;
  font-size: 12px;
}
.group-title::after {
  order: 1;
  flex: 1;
  height: 1px;
  margin: 0 8px 0 4px;
  background: #d6e5f5;
  content: "";
}
.group-title svg {
  order: 2;
}
.scrollbar {
  display: flex;
  flex-direction: column;
  width: 17px;
  border: 1px solid #a8a8a8;
  border-width: 0 1px;
}
.scroll-up {
  display: grid;
  place-items: center;
  height: 17px;
  border-bottom: 1px solid #c0c0c0;
}
.scroll-track {
  flex: 137;
}
.scroll-thumb {
  display: flex;
  flex: 342;
  flex-direction: column;
  align-items: center;
  justify-content: center;
  gap: 1px;
  border: 1px solid #a8a8a8;
  border-width: 1px 0;
  background: #dadada;
}
.scroll-thumb i {
  width: 7px;
  height: 2px;
  background: #606060;
}
.scroll-end {
  height: 19px;
}

.actions {
  display: flex;
  flex-direction: column;
  border: 1px solid #a0a0a0;
  border-width: 0 1px;
}
.actions .pane-title {
  padding-left: 7px;
}
.action-list {
  flex: 1;
  padding: 2px 3px 0 5px;
  background: linear-gradient(90deg, #fff, #e1e1e1);
}
.action-list ul {
  padding: 2px 0;
  border-bottom: 1px solid;
  border-image: linear-gradient(90deg, transparent, #808080 30%) 1;
}
.action-list ul:last-child {
  border: 0;
}
.action-list li {
  display: flex;
  align-items: center;
  min-height: 20px;
}
.action-label {
  margin: -1px 0 1px;
  padding-right: 8px;
  font-weight: 400;
  word-break: break-all;
}
.action-list a {
  color: #0066cc;
  text-decoration: none;
}
.heading .action-label {
  font-weight: 500;
}
.latin .action-label {
  font-size: 12px;
}
.disabled .action-label {
  color: #9b9b9b;
}
.action-icon {
  flex: none;
  width: 24px;
}
</style>
